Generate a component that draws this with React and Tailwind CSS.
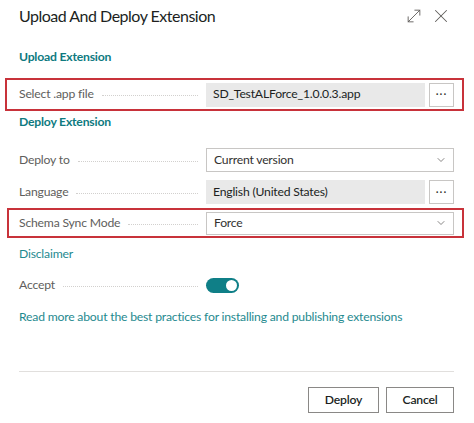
import { MoveDiagonal, X, ChevronDown } from "lucide-react";

function Leader({ label }) {
  return (
    <div className="flex items-center flex-1 min-w-0 pr-[8px]">
      <span className="text-[#605e5c] whitespace-nowrap">{label}</span>
      <div className="flex-1 ml-[8px] mt-[3px] border-b-[1.5px] border-dotted border-[#d2d0ce]"></div>
    </div>
  );
}

function MoreButton() {
  return (
    <button className="w-[25px] h-full border border-[#c8c6c4] bg-white flex items-center justify-center text-[#323130] text-[11px] tracking-[1px] leading-none pb-[2px]">
      ···
    </button>
  );
}

function Select({ value }) {
  return (
    <div className="w-[248px] h-full border border-[#c8c6c4] bg-white flex items-center justify-between pl-[7px] pr-[6px] text-[#323130]">
      <span>{value}</span>
      <ChevronDown className="w-[12px] h-[12px] text-[#605e5c]" strokeWidth={1.5} />
    </div>
  );
}

export default function App() {
  return (
    <div className="w-[474px] h-[423px] bg-white font-['Lato',sans-serif] text-[12.2px] tracking-[-0.2px] text-[#323130] overflow-hidden">
      <div className="flex items-center justify-between pl-[19px] pr-[22px] pt-[4px] h-[28px]">
        <h1 className="text-[16px] tracking-[-0.5px] leading-[24px] text-[#201f1e]">Upload And Deploy Extension</h1>
        <div className="flex items-center gap-[6px] text-[#605e5c]">
          <MoveDiagonal className="w-[20px] h-[20px]" strokeWidth={1.1} />
          <X className="w-[22px] h-[22px]" strokeWidth={1.1} />
        </div>
      </div>

      <div className="px-[19px] pr-[20px]">
        <div className="mt-[19px] h-[20px] leading-[20px] font-bold text-[#0e7a7f]">Upload Extension</div>

        <div className="mt-[11px] -ml-[14px] -mr-[10px] pl-[12px] pr-[8px] h-[33px] border-2 border-[#c8323a] flex items-center">
          <Leader label="Select .app file" />
          <div className="flex h-[24px] gap-[4px]">
            <div className="w-[219px] h-full bg-[#e9e9e9] flex items-center pl-[7px] text-[#201f1e]">SD_TestALForce_1.0.0.3.app</div>
            <MoreButton />
          </div>
        </div>

        <div className="mt-[1px] h-[20px] leading-[20px] font-bold text-[#0e7a7f]">Deploy Extension</div>

        <div className="mt-[16px] h-[24px] flex items-center">
          <Leader label="Deploy to" />
          <Select value="Current version" />
        </div>

        <div className="mt-[8px] h-[24px] flex items-center">
          <Leader label="Language" />
          <div className="flex h-full gap-[4px]">
            <div className="w-[219px] h-full bg-[#e9e9e9] flex items-center pl-[7px] text-[#201f1e]">English (United States)</div>
            <MoreButton />
          </div>
        </div>

        <div className="mt-[4px] -ml-[12px] -mr-[10px] pl-[10px] pr-[8px] h-[30px] border-2 border-[#c8323a] flex items-center">
          <Leader label="Schema Sync Mode" />
          <div className="h-[23px]">
            <Select value="Force" />
          </div>
        </div>

        <div className="mt-[6px] h-[20px] leading-[20px] text-[#1f8a8f]">Disclaimer</div>

        <div className="mt-[11px] h-[20px] flex items-center">
          <Leader label="Accept" />
          <div className="w-[248px]">
            <div className="w-[33px] h-[15px] rounded-full bg-[#0f7f87] flex items-center justify-end pr-[2px]">
              <div className="w-[11px] h-[11px] rounded-full bg-white"></div>
            </div>
          </div>
        </div>

        <div className="mt-[12px] h-[20px] leading-[20px] text-[#1f8a8f] whitespace-nowrap">
          Read more about the best practices for installing and publishing extensions
        </div>

        <div className="mt-[44px] h-px bg-[#e1dfdd]"></div>

        <div className="mt-[15px] flex justify-end gap-[7px]">
          <button className="w-[71px] h-[26px] border border-[#8a8886] bg-white text-[#201f1e] font-semibold">Deploy</button>
          <button className="w-[68px] h-[26px] border border-[#8a8886] bg-white text-[#201f1e] font-semibold">Cancel</button>
        </div>
      </div>
    </div>
  );
}
